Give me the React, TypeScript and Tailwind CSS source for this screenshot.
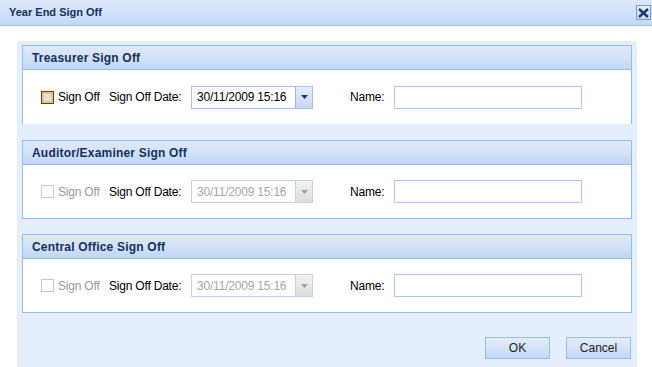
const font = { fontFamily: '"Liberation Sans", Arial, sans-serif' };

function Checkbox({ enabled }: { enabled: boolean }) {
  if (!enabled) {
    return <div className="w-[13px] h-[13px] border border-[#c9c9bd] bg-white" />;
  }
  return (
    <div className="w-[13px] h-[13px] border border-[#1c5180] bg-[#f3c367] p-[2px]">
      <div className="w-full h-full bg-[#e3e3e0]" />
    </div>
  );
}

function DateField({ enabled }: { enabled: boolean }) {
  return (
    <div
      className={`flex items-center w-[122px] h-[23px] border bg-white ${
        enabled ? 'border-[#a9c1e6]' : 'border-[#c3d3ee]'
      }`}
    >
      <span className={`flex-1 pl-[5px] text-[12px] ${enabled ? 'text-black' : 'text-[#a6a6a6]'}`}>
        30/11/2009 15:16
      </span>
      <div
        className={`w-[17px] h-[21px] flex items-center justify-center border-l ${
          enabled
            ? 'border-[#9ab7e1] bg-gradient-to-b from-[#e3edfa] to-[#c6d9f3]'
            : 'border-[#c9d3e0] bg-gradient-to-b from-[#f2f2f2] to-[#dcdcdc]'
        }`}
      >
        <svg width="7" height="4" viewBox="0 0 7 4">
          <path d="M0 0h7L3.5 4z" fill={enabled ? '#1a3766' : '#a0a0a0'} />
        </svg>
      </div>
    </div>
  );
}

function SignOffSet({
  title,
  enabled,
  bottomBorder = true,
  className = '',
}: {
  title: string;
  enabled: boolean;
  bottomBorder?: boolean;
  className?: string;
}) {
  return (
    <div
      className={`flex flex-col w-[610px] h-[79px] bg-white border-x border-t border-[#99bbe8] ${
        bottomBorder ? 'border-b' : ''
      } ${className}`}
    >
      <div className="h-[24px] flex items-center pl-[9px] border-b border-[#99bbe8] bg-gradient-to-b from-[#dfe9f9] via-[#d2e2f8] to-[#c1d7f4]">
        <span className="text-[12px] font-bold text-[#15305e] tracking-[0.2px]">{title}</span>
      </div>
      <div className="flex-1 flex items-center text-[12px] tracking-[-0.2px]">
        <div className="ml-[18px]">
          <Checkbox enabled={enabled} />
        </div>
        <span className={`ml-[4px] w-[51px] ${enabled ? 'text-black' : 'text-[#9a9a9a]'}`}>Sign Off</span>
        <span className="w-[82px] text-black whitespace-nowrap">Sign Off Date:</span>
        <DateField enabled={enabled} />
        <span className="ml-[37px] w-[44px] text-black">Name:</span>
        <div className="w-[188px] h-[23px] border border-[#b0c7ec] bg-white" />
      </div>
    </div>
  );
}

export default function App() {
  return (
    <div className="w-[652px] h-[367px] bg-white overflow-hidden" style={font}>
      <div className="h-[26px] flex items-center justify-between border-b border-[#9fbde8] bg-gradient-to-b from-[#dde9fb] via-[#d0e1f8] to-[#c4d9f6]">
        <span className="pl-[9px] text-[11px] font-bold text-[#15305e]">Year End Sign Off</span>
        <div className="mr-[1px] w-[15px] h-[15px] border border-[#7d99c7] bg-gradient-to-b from-[#e6eefb] to-[#c5d8f3] flex items-center justify-center">
          <svg width="11" height="10" viewBox="0 0 11 10">
            <path d="M1 1l9 8M10 1l-9 8" stroke="#1f3a6b" strokeWidth="2.4" />
          </svg>
        </div>
      </div>
      <div className="ml-[17px] mt-[15px] w-[620px] h-[326px] bg-[#e4eefd] pl-[5px] pt-[4px]">
        <SignOffSet title="Treasurer Sign Off" enabled bottomBorder={false} />
        <SignOffSet title="Auditor/Examiner Sign Off" enabled={false} className="mt-[16px]" />
        <SignOffSet title="Central Office Sign Off" enabled={false} className="mt-[15px]" />
        <div className="flex justify-end gap-[16px] mt-[24px] pr-[6px]">
          {['OK', 'Cancel'].map((label) => (
            <button
              key={label}
              className="w-[65px] h-[22px] text-[12px] text-[#222] border border-[#99bbe8] bg-gradient-to-b from-[#e4edfa] via-[#d4e3f8] to-[#c3d8f4]"
            >
              {label}
            </button>
          ))}
        </div>
      </div>
    </div>
  );
}
